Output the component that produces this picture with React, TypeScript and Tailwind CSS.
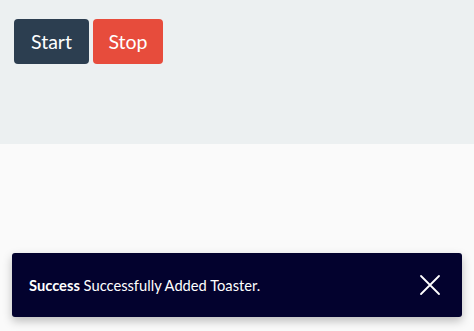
export default function App() {
  return (
    <div className="relative h-[331px] w-full bg-[#fafafa]" style={{ fontFamily: 'Lato, "Open Sans", sans-serif' }}>
      <div className="h-[144px] bg-[#ecf0f1] px-[14px] pt-[19px]">
        <div className="flex gap-[4px]">
          <button className="h-[45px] w-[75px] rounded-[4px] bg-[#2c3e50] text-[19.5px] text-white">Start</button>
          <button className="h-[45px] w-[70px] rounded-[4px] bg-[#e74c3c] text-[19.5px] text-white">Stop</button>
        </div>
      </div>
      <div className="absolute left-[12px] top-[253px] flex h-[64px] w-[450px] items-center justify-between rounded-[3px] bg-[#03022e] pl-[17px] pr-[20px] text-[14.7px] text-white shadow-[0_4px_10px_rgba(0,0,0,0.25)]">
        <span>
          <span className="font-bold">Success</span> Successfully Added Toaster.
        </span>
        <svg width="22" height="22" viewBox="0 0 22 22" className="mr-[1px]">
          <path d="M2 2 L20 20 M20 2 L2 20" stroke="white" strokeWidth="1.8" strokeLinecap="round" />
        </svg>
      </div>
    </div>
  );
}
